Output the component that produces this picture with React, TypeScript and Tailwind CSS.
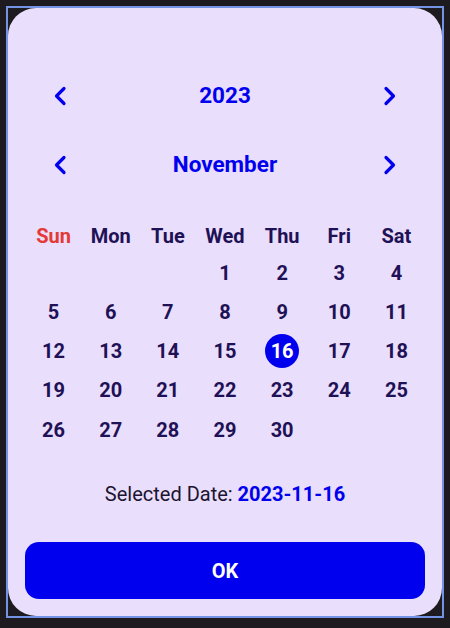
import { useState } from 'react';

const WEEKDAYS = ['Sun', 'Mon', 'Tue', 'Wed', 'Thu', 'Fri', 'Sat'];
const MONTHS = [
  'January', 'February', 'March', 'April', 'May', 'June',
  'July', 'August', 'September', 'October', 'November', 'December'
];

const Chevron = ({ dir }: { dir: 'left' | 'right' }) => (
  <svg width="14" height="20" viewBox="0 0 14 20" fill="none">
    <polyline
      points={dir === 'left' ? '11,2.5 3.5,10 11,17.5' : '3,2.5 10.5,10 3,17.5'}
      stroke="#0000ee"
      strokeWidth="3.2"
      strokeLinecap="round"
      strokeLinejoin="round"
    />
  </svg>
);

const NavRow = ({ label, onPrev, onNext, className }: { label: string; onPrev: () => void; onNext: () => void; className?: string }) => (
  <div className={`flex h-10 items-center justify-between ${className ?? ''}`}>
    <button onClick={onPrev} className="mx-[15px] flex h-10 w-10 items-center justify-center">
      <Chevron dir="left" />
    </button>
    <span className="text-[22.5px] font-bold text-[#0000ee]">{label}</span>
    <button onClick={onNext} className="mx-[15px] flex h-10 w-10 items-center justify-center">
      <Chevron dir="right" />
    </button>
  </div>
);

export default function App() {
  const [year, setYear] = useState(2023);
  const [month, setMonth] = useState(10);
  const [selected, setSelected] = useState({ y: 2023, m: 10, d: 16 });

  const firstDay = new Date(year, month, 1).getDay();
  const daysInMonth = new Date(year, month + 1, 0).getDate();
  const cells: (number | null)[] = [];
  for (let i = 0; i < firstDay; i++) cells.push(null);
  for (let d = 1; d <= daysInMonth; d++) cells.push(d);

  const pad = (n: number) => String(n).padStart(2, '0');
  const selectedText = `${selected.y}-${pad(selected.m + 1)}-${pad(selected.d)}`;

  return (
    <div className="h-[628px] w-full bg-[#1d1b20] p-[6px] font-['Roboto',sans-serif]">
      <div className="h-[612px] w-[438px] border-2 border-[#7393e4]">
        <div className="flex h-full flex-col rounded-[28px] bg-[#e9defb] px-[17px] pb-[17px] pt-[68px]">
          <NavRow label={String(year)} onPrev={() => setYear(year - 1)} onNext={() => setYear(year + 1)} />
          <NavRow
            className="mt-[29px]"
            label={MONTHS[month]}
            onPrev={() => setMonth((month + 11) % 12)}
            onNext={() => setMonth((month + 1) % 12)}
          />

          <div className="mt-[34px] grid h-[34px] grid-cols-7 items-center">
            {WEEKDAYS.map((w, i) => (
              <span
                key={w}
                className={`text-center text-[20px] font-bold ${i === 0 ? 'text-[#e53935]' : 'text-[#1f1156]'}`}
              >
                {w}
              </span>
            ))}
          </div>

          <div className="grid grid-cols-7 auto-rows-[39.25px]">
            {cells.map((d, i) => {
              const isSel = d !== null && selected.y === year && selected.m === month && selected.d === d;
              return (
                <div key={i} className="flex items-center justify-center">
                  {d !== null && (
                    <button
                      onClick={() => setSelected({ y: year, m: month, d })}
                      className={`flex h-[34px] w-[34px] items-center justify-center rounded-full text-[20px] font-bold ${
                        isSel ? 'bg-[#0000ee] text-white' : 'text-[#1f1156]'
                      }`}
                    >
                      {d}
                    </button>
                  )}
                </div>
              );
            })}
          </div>

          <p className="mt-auto text-center text-[20px] leading-7 text-[#1c1430]">
            Selected Date: <span className="font-bold text-[#0000ee]">{selectedText}</span>
          </p>

          <button className="mt-[34px] h-[57px] w-full rounded-[14px] bg-[#0000ee] text-[20px] font-bold text-white">
            OK
          </button>
        </div>
      </div>
    </div>
  );
}
